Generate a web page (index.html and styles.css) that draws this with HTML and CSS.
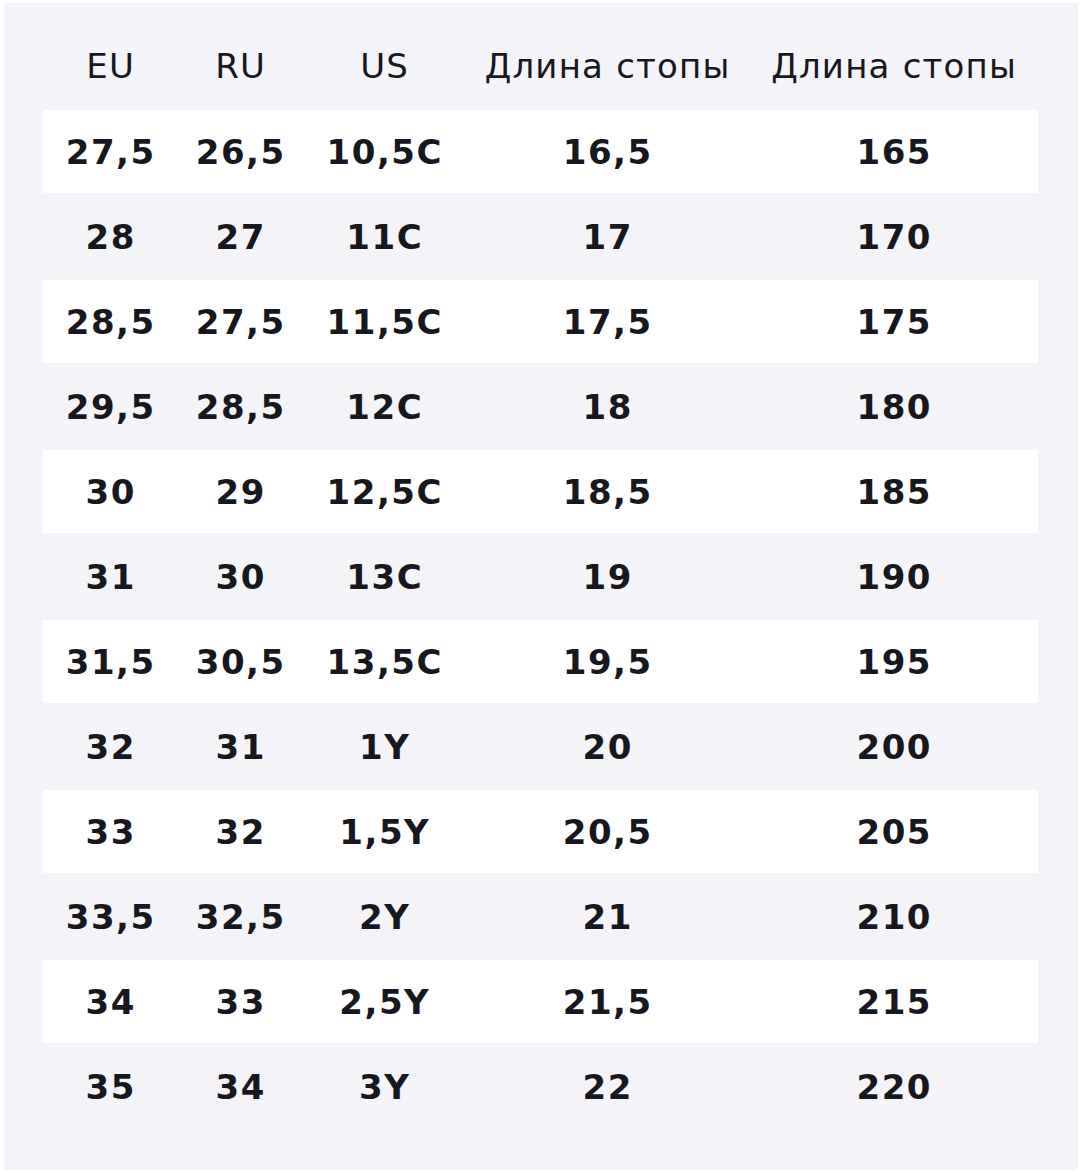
FILE: index.html
```html
<!DOCTYPE html>
<html lang="ru">
<head>
<meta charset="utf-8">
<link rel="stylesheet" href="styles.css">
</head>
<body>
<div class="card">
  <div class="table">
    <div class="row head">
      <div>EU</div><div>RU</div><div>US</div><div>Длина стопы</div><div>Длина стопы</div>
    </div>
    <div class="row odd"><div>27,5</div><div>26,5</div><div>10,5C</div><div>16,5</div><div>165</div></div>
    <div class="row even"><div>28</div><div>27</div><div>11C</div><div>17</div><div>170</div></div>
    <div class="row odd"><div>28,5</div><div>27,5</div><div>11,5C</div><div>17,5</div><div>175</div></div>
    <div class="row even"><div>29,5</div><div>28,5</div><div>12C</div><div>18</div><div>180</div></div>
    <div class="row odd"><div>30</div><div>29</div><div>12,5C</div><div>18,5</div><div>185</div></div>
    <div class="row even"><div>31</div><div>30</div><div>13C</div><div>19</div><div>190</div></div>
    <div class="row odd"><div>31,5</div><div>30,5</div><div>13,5C</div><div>19,5</div><div>195</div></div>
    <div class="row even"><div>32</div><div>31</div><div>1Y</div><div>20</div><div>200</div></div>
    <div class="row odd"><div>33</div><div>32</div><div>1,5Y</div><div>20,5</div><div>205</div></div>
    <div class="row even"><div>33,5</div><div>32,5</div><div>2Y</div><div>21</div><div>210</div></div>
    <div class="row odd"><div>34</div><div>33</div><div>2,5Y</div><div>21,5</div><div>215</div></div>
    <div class="row even"><div>35</div><div>34</div><div>3Y</div><div>22</div><div>220</div></div>
  </div>
</div>
</body>
</html>
```

FILE: styles.css
```css
html, body {
  margin: 0;
  padding: 0;
  background: #ffffff;
}
body {
  padding: 3px 3px 3px 3px;
  font-family: "DejaVu Sans", Verdana, sans-serif;
  color: #17171e;
}
.card {
  width: 1075px;
  height: 1167px;
  box-sizing: border-box;
  background: #f3f3f8;
  padding: 40px;
}
.table {
  display: flex;
  flex-direction: column;
}
.row {
  display: grid;
  grid-template-columns: 134px 126px 162px 284px 289px;
  font-size: 34px;
  font-weight: bold;
  letter-spacing: 1.5px;
}
.row > div {
  display: flex;
  align-items: center;
  justify-content: center;
  white-space: nowrap;
  padding-left: 1.5px;
}
.head {
  font-weight: normal;
  letter-spacing: 1.2px;
  height: 67px;
  padding-bottom: 21px;
  box-sizing: border-box;
}
.head > div {
  padding-left: 1.2px;
}
.odd {
  height: 83px;
  background: #ffffff;
}
.even {
  height: 87px;
}
```
